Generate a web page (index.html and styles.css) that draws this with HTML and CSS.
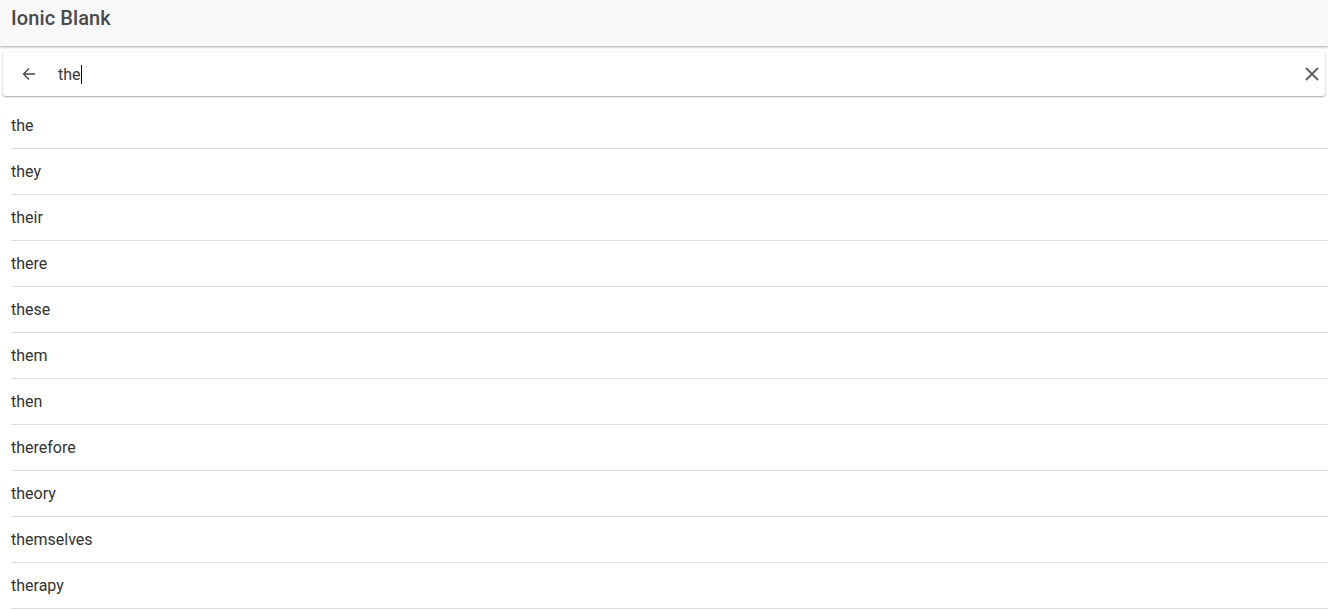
FILE: index.html
```html
<!DOCTYPE html>
<html>
<head>
<meta charset="utf-8">
<link rel="stylesheet" href="styles.css">
</head>
<body>
<header class="toolbar">
  <div class="title">Ionic Blank</div>
</header>
<div class="search-wrap">
  <div class="searchbar">
    <svg class="back" width="14" height="14" viewBox="0 0 14 14"><path d="M13 7H1.8M7 1.5L1.5 7L7 12.5" fill="none" stroke="#4a4a4a" stroke-width="1.3"/></svg>
    <span class="query">the<span class="caret"></span></span>
    <svg class="clear" width="14" height="14" viewBox="0 0 14 14"><path d="M1 1L13 13M13 1L1 13" fill="none" stroke="#5f5f5f" stroke-width="1.9"/></svg>
  </div>
</div>
<ul class="list">
  <li>the</li>
  <li>they</li>
  <li>their</li>
  <li>there</li>
  <li>these</li>
  <li>them</li>
  <li>then</li>
  <li>therefore</li>
  <li>theory</li>
  <li>themselves</li>
  <li>therapy</li>
</ul>
</body>
</html>
```
FILE: styles.css
```css
html, body {
  margin: 0;
  padding: 0;
  background: #fff;
  font-family: Roboto, "Noto Sans", sans-serif;
  overflow: hidden;
  height: 610px;
}
.toolbar {
  height: 46px;
  background: #f8f8f8;
  box-shadow: 0 1px 2px rgba(0,0,0,0.25), 0 2px 3px rgba(0,0,0,0.08);
  display: flex;
  align-items: flex-start;
  padding: 0 11px;
  position: relative;
  z-index: 2;
}
.title {
  font-size: 20px;
  font-weight: 500;
  color: #4a4a4a;
  line-height: 20px;
  margin-top: 8px;
  letter-spacing: 0.1px;
}
.search-wrap {
  padding: 6px 3px 7px;
}
.searchbar {
  height: 44px;
  background: #fff;
  box-shadow: 0 1px 2px rgba(0,0,0,0.35), 0 0 1px rgba(0,0,0,0.15);
  border-radius: 2px;
  display: flex;
  align-items: center;
  padding: 0 6px 0 19px;
}
.back {
  flex: none;
}
.query {
  margin-left: 22px;
  font-size: 16px;
  color: #3a3a3a;
  flex: 1;
  display: flex;
  align-items: center;
  margin-top: 1px;
}
.caret {
  display: inline-block;
  width: 1px;
  height: 19px;
  background: #000;
}
.clear {
  flex: none;
}
.list {
  list-style: none;
  margin: 0;
  padding: 0 0 0 11px;
}
.list li {
  height: 45px;
  border-bottom: 1px solid #dedede;
  font-size: 16px;
  color: #333;
  display: flex;
  align-items: center;
}
```
